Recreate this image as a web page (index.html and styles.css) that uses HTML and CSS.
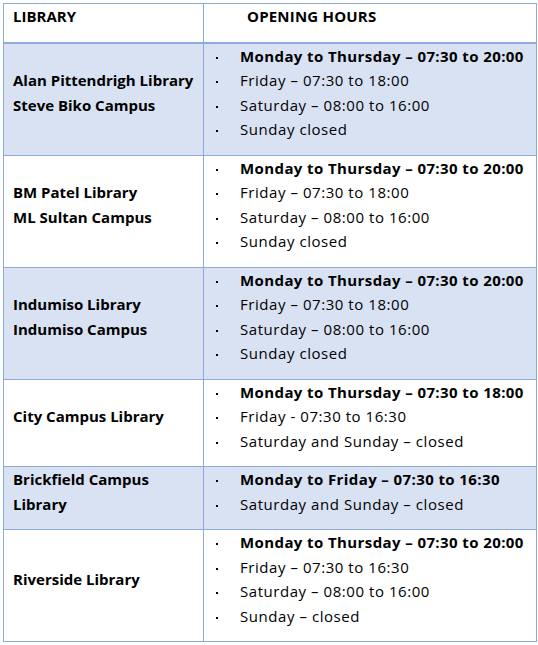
FILE: index.html
```html
<!DOCTYPE html>
<html lang="en">
<head>
<meta charset="utf-8">
<title>Library Opening Hours</title>
<link rel="stylesheet" href="styles.css">
</head>
<body>
<table class="hours">
  <colgroup>
    <col class="col-lib">
    <col class="col-hours">
  </colgroup>
  <thead>
    <tr class="head">
      <th class="lib">LIBRARY</th>
      <th class="hrs-head">OPENING HOURS</th>
    </tr>
  </thead>
  <tbody>
    <tr class="shade">
      <td class="lib"><div class="name">Alan Pittendrigh Library</div><div class="name">Steve Biko Campus</div></td>
      <td class="hrs">
        <ul>
          <li class="b">Monday to Thursday – 07:30 to 20:00</li>
          <li>Friday – 07:30 to 18:00</li>
          <li>Saturday – 08:00 to 16:00</li>
          <li>Sunday closed</li>
        </ul>
      </td>
    </tr>
    <tr>
      <td class="lib"><div class="name">BM Patel Library</div><div class="name">ML Sultan Campus</div></td>
      <td class="hrs">
        <ul>
          <li class="b">Monday to Thursday – 07:30 to 20:00</li>
          <li>Friday – 07:30 to 18:00</li>
          <li>Saturday – 08:00 to 16:00</li>
          <li>Sunday closed</li>
        </ul>
      </td>
    </tr>
    <tr class="shade">
      <td class="lib"><div class="name">Indumiso Library</div><div class="name">Indumiso Campus</div></td>
      <td class="hrs">
        <ul>
          <li class="b">Monday to Thursday – 07:30 to 20:00</li>
          <li>Friday – 07:30 to 18:00</li>
          <li>Saturday – 08:00 to 16:00</li>
          <li>Sunday closed</li>
        </ul>
      </td>
    </tr>
    <tr>
      <td class="lib"><div class="name">City Campus Library</div></td>
      <td class="hrs">
        <ul>
          <li class="b">Monday to Thursday – 07:30 to 18:00</li>
          <li>Friday - 07:30 to 16:30</li>
          <li>Saturday and Sunday – closed</li>
        </ul>
      </td>
    </tr>
    <tr class="shade">
      <td class="lib"><div class="name">Brickfield Campus</div><div class="name">Library</div></td>
      <td class="hrs">
        <ul>
          <li class="b">Monday to Friday – 07:30 to 16:30</li>
          <li>Saturday and Sunday – closed</li>
        </ul>
      </td>
    </tr>
    <tr>
      <td class="lib"><div class="name">Riverside Library</div></td>
      <td class="hrs">
        <ul>
          <li class="b">Monday to Thursday – 07:30 to 20:00</li>
          <li>Friday – 07:30 to 16:30</li>
          <li>Saturday – 08:00 to 16:00</li>
          <li>Sunday – closed</li>
        </ul>
      </td>
    </tr>
  </tbody>
</table>
</body>
</html>
```
FILE: styles.css
```css
html, body {
  margin: 0;
  padding: 0;
  background: #ffffff;
}
body {
  padding: 3px 0 0 3px;
  font-family: "Open Sans", Lato, "Liberation Sans", sans-serif;
  font-size: 15px;
  color: #000000;
}
.hours {
  border-collapse: collapse;
  table-layout: fixed;
  width: 533px;
}
.col-lib { width: 200px; }
.col-hours { width: 333px; }
.hours th,
.hours td {
  border: 1px solid #8eaadb;
  padding: 0 9px 13px 9px;
  line-height: 24.5px;
  text-align: left;
  vertical-align: middle;
}
.hours th {
  font-weight: bold;
  vertical-align: top;
  border-bottom: 2px solid #8eaadb;
}
.hours th.hrs-head {
  padding-left: 43px;
  letter-spacing: 0.2px;
}
.hours td.lib {
  font-weight: bold;
  white-space: nowrap;
}
.shade td {
  background: #d9e2f3;
}
.hrs ul {
  list-style: none;
  margin: 0;
  padding: 0;
}
.hrs li {
  position: relative;
  padding-left: 27px;
  white-space: nowrap;
  letter-spacing: 0.55px;
}
.hrs li::before {
  content: "";
  position: absolute;
  left: 3px;
  top: 13px;
  width: 2px;
  height: 2px;
  background: #000000;
}
.hrs li.b {
  font-weight: bold;
  letter-spacing: 0.4px;
}
```
